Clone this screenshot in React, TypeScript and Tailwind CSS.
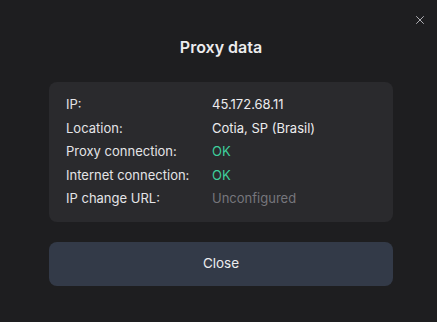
import { X } from 'lucide-react';

const rows: { label: string; value: string; tone: 'plain' | 'ok' | 'muted' }[] = [
  { label: 'IP:', value: '45.172.68.11', tone: 'plain' },
  { label: 'Location:', value: 'Cotia, SP (Brasil)', tone: 'plain' },
  { label: 'Proxy connection:', value: 'OK', tone: 'ok' },
  { label: 'Internet connection:', value: 'OK', tone: 'ok' },
  { label: 'IP change URL:', value: 'Unconfigured', tone: 'muted' },
];

const toneClass = {
  plain: 'text-[#ececee]',
  ok: 'text-[#3ecf9c]',
  muted: 'text-[#76767c]',
};

export default function App() {
  return (
    <div
      className="relative h-[322px] w-[437px] bg-[#1e1e20] pl-[49px] pr-[44px] pt-[34px] text-[#ececee]"
      style={{ fontFamily: 'Inter, "Noto Sans", sans-serif' }}
    >
      <button
        aria-label="Close dialog"
        className="absolute right-[10px] top-[13px] flex h-[14px] w-[14px] items-center justify-center text-[#b9b9be]"
      >
        <X size={14} strokeWidth={1.6} />
      </button>

      <h2 className="text-center text-[16px] font-semibold leading-[26px]">Proxy data</h2>

      <div className="mt-[22px] rounded-[8px] bg-[#2a2a2d] px-[17px] py-[11px] text-[13px] leading-[23.5px]">
        {rows.map((r) => (
          <div key={r.label} className="flex">
            <span className="w-[146px] shrink-0 text-[#e4e4e7]">{r.label}</span>
            <span className={toneClass[r.tone]}>{r.value}</span>
          </div>
        ))}
      </div>

      <button className="mt-[20px] flex h-[44px] w-full items-center justify-center rounded-[8px] bg-[#333a48] text-[13.5px] text-[#ececee]">
        Close
      </button>
    </div>
  );
}
